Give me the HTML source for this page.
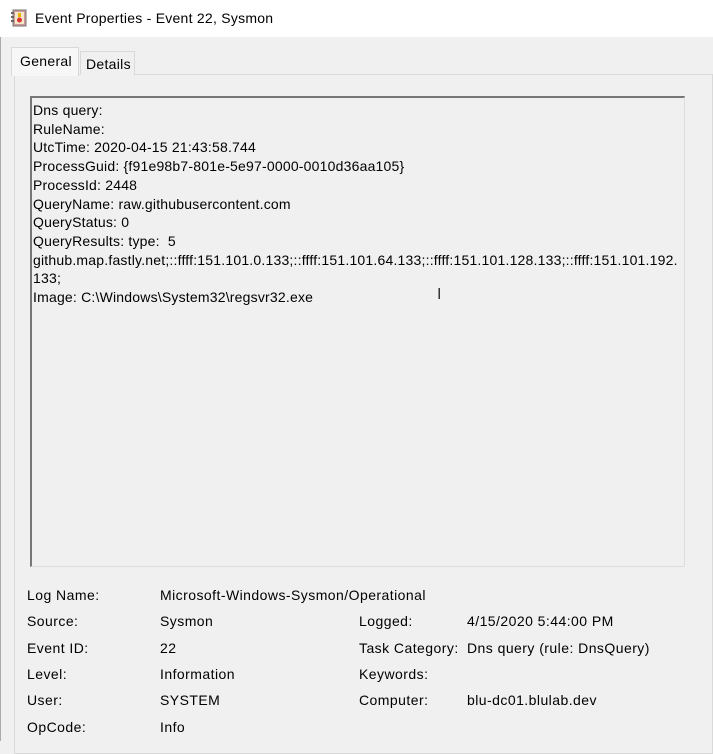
<!DOCTYPE html>
<html><head><meta charset="utf-8"><style>
*{margin:0;padding:0;box-sizing:border-box}
body{width:713px;height:741px;overflow:hidden;background:#f0f0f0;font-family:"Liberation Sans",sans-serif;font-size:14px;color:#000;position:relative;letter-spacing:0.45px}
.title{position:absolute;left:0;top:0;width:713px;height:37px;background:#fff;}
.title span{position:absolute;left:35px;top:10px;font-size:14px;letter-spacing:0.25px}
.lb{position:absolute;left:0;top:37px;width:1px;height:704px;background:#aaa}
.tab{position:absolute;background:#f0f0f0;border:1px solid #d9d9d9;border-bottom:none}
.panel{position:absolute;left:14px;top:74px;width:699px;height:680px;border:1px solid #d9d9d9}
.box{position:absolute;left:30px;top:96px;width:655px;height:471px;border-top:2px solid #777;border-left:2px solid #777;border-right:1px solid #ddd;border-bottom:1px solid #ddd;background:#f0f0f0}
.txt{position:absolute;left:33px;top:101px;line-height:18.7px;white-space:pre;letter-spacing:0.2px}
.r{position:absolute;white-space:nowrap}
</style></head><body>
<div class="title">
<svg style="position:absolute;left:11px;top:9px" width="16" height="18" viewBox="0 0 16 18"><rect x="2" y="1" width="13" height="16" fill="#c99" stroke="#777"/><rect x="4" y="3" width="9" height="12" fill="#f4e8c8"/><rect x="0" y="3" width="3" height="2" fill="#666"/><rect x="0" y="7" width="3" height="2" fill="#666"/><rect x="0" y="11" width="3" height="2" fill="#666"/><circle cx="8.5" cy="11" r="2.5" fill="#d33"/><rect x="7" y="4" width="3" height="4" fill="#e9b400"/></svg>
<span>Event Properties - Event 22, Sysmon</span></div>
<div class="lb"></div>
<div class="panel"></div>
<div class="tab" style="left:80px;top:51px;width:55px;height:24px"><span style="position:absolute;left:5px;top:4px;letter-spacing:0.3px">Details</span></div>
<div class="tab" style="left:11px;top:47px;width:68px;height:29px;background:#f7f7f7;z-index:2"><span style="position:absolute;left:8px;top:5px;letter-spacing:0.3px">General</span></div>
<div class="box"></div>
<div class="txt">Dns query:
RuleName:
UtcTime: 2020-04-15 21:43:58.744
ProcessGuid: {f91e98b7-801e-5e97-0000-0010d36aa105}
ProcessId: 2448
QueryName: raw.githubusercontent.com
QueryStatus: 0
QueryResults: type:  5
github.map.fastly.net;::ffff:151.101.0.133;::ffff:151.101.64.133;::ffff:151.101.128.133;::ffff:151.101.192.
133;
Image: C:\Windows\System32\regsvr32.exe</div>
<div class="r" style="left:437px;top:286px;font-size:16px;color:#333">I</div>
<div class="r" style="left:27px;top:587px">Log Name:</div><div class="r" style="left:160px;top:587px">Microsoft-Windows-Sysmon/Operational</div>
<div class="r" style="left:27px;top:613px">Source:</div><div class="r" style="left:160px;top:613px">Sysmon</div><div class="r" style="left:359px;top:613px">Logged:</div><div class="r" style="left:467px;top:613px">4/15/2020 5:44:00 PM</div>
<div class="r" style="left:27px;top:640px">Event ID:</div><div class="r" style="left:160px;top:640px">22</div><div class="r" style="left:359px;top:640px">Task Category:</div><div class="r" style="left:467px;top:640px">Dns query (rule: DnsQuery)</div>
<div class="r" style="left:27px;top:666px">Level:</div><div class="r" style="left:160px;top:666px">Information</div><div class="r" style="left:359px;top:666px">Keywords:</div>
<div class="r" style="left:27px;top:692px">User:</div><div class="r" style="left:160px;top:692px">SYSTEM</div><div class="r" style="left:359px;top:692px">Computer:</div><div class="r" style="left:467px;top:692px">blu-dc01.blulab.dev</div>
<div class="r" style="left:27px;top:719px">OpCode:</div><div class="r" style="left:160px;top:719px">Info</div>
</body></html>
